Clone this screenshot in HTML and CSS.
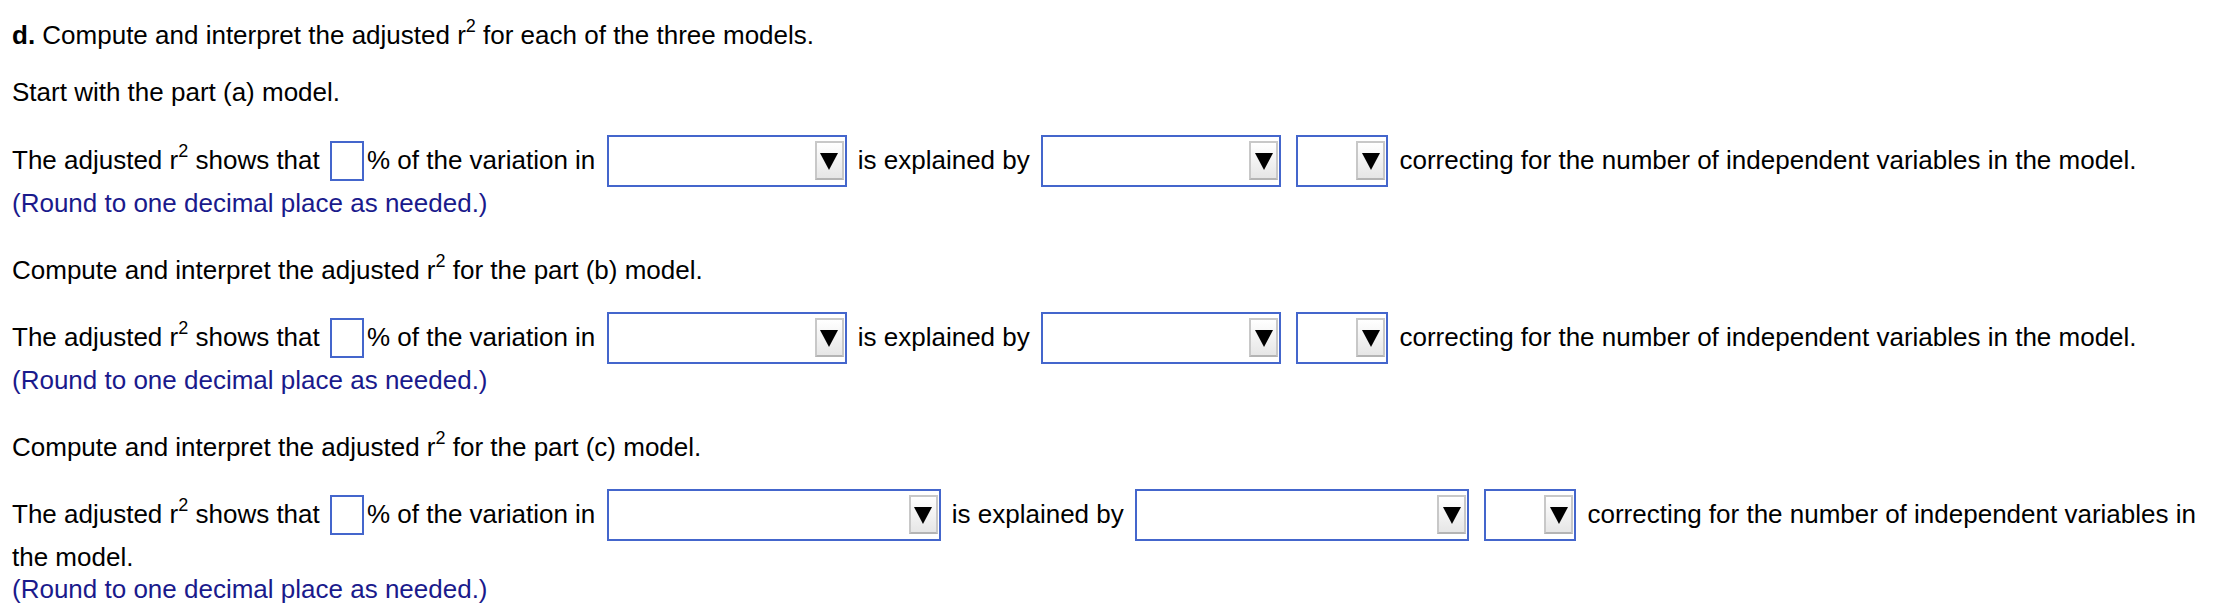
FILE: index.html
```html
<!DOCTYPE html>
<html>
<head>
<meta charset="utf-8">
<link rel="stylesheet" href="styles.css">
</head>
<body>
<div class="page">
  <p class="q first"><b>d.</b> Compute and interpret the adjusted r<sup>2</sup> for each of the three models.</p>
  <p class="q start">Start with the part (a) model.</p>

  <div class="answer">
    <div class="line">The adjusted r<sup>2</sup> shows that <span class="box"></span>% of the variation in <span class="sel w240"><span class="btn"><svg width="18" height="18" viewBox="0 0 18 18"><polygon points="0,1 18,1 9,18" fill="#000"/></svg></span></span> is explained by <span class="sel w240"><span class="btn"><svg width="18" height="18" viewBox="0 0 18 18"><polygon points="0,1 18,1 9,18" fill="#000"/></svg></span></span> <span class="sel w92"><span class="btn"><svg width="18" height="18" viewBox="0 0 18 18"><polygon points="0,1 18,1 9,18" fill="#000"/></svg></span></span> correcting for the number of independent variables in the model.</div>
    <div class="hint">(Round to one decimal place as needed.)</div>
  </div>

  <p class="q sec">Compute and interpret the adjusted r<sup>2</sup> for the part (b) model.</p>

  <div class="answer">
    <div class="line">The adjusted r<sup>2</sup> shows that <span class="box"></span>% of the variation in <span class="sel w240"><span class="btn"><svg width="18" height="18" viewBox="0 0 18 18"><polygon points="0,1 18,1 9,18" fill="#000"/></svg></span></span> is explained by <span class="sel w240"><span class="btn"><svg width="18" height="18" viewBox="0 0 18 18"><polygon points="0,1 18,1 9,18" fill="#000"/></svg></span></span> <span class="sel w92"><span class="btn"><svg width="18" height="18" viewBox="0 0 18 18"><polygon points="0,1 18,1 9,18" fill="#000"/></svg></span></span> correcting for the number of independent variables in the model.</div>
    <div class="hint">(Round to one decimal place as needed.)</div>
  </div>

  <p class="q sec">Compute and interpret the adjusted r<sup>2</sup> for the part (c) model.</p>

  <div class="answer">
    <div class="line">The adjusted r<sup>2</sup> shows that <span class="box"></span>% of the variation in <span class="sel w334"><span class="btn"><svg width="18" height="18" viewBox="0 0 18 18"><polygon points="0,1 18,1 9,18" fill="#000"/></svg></span></span> is explained by <span class="sel w334"><span class="btn"><svg width="18" height="18" viewBox="0 0 18 18"><polygon points="0,1 18,1 9,18" fill="#000"/></svg></span></span> <span class="sel w92"><span class="btn"><svg width="18" height="18" viewBox="0 0 18 18"><polygon points="0,1 18,1 9,18" fill="#000"/></svg></span></span> correcting for the number of independent variables in the model.</div>
    <div class="hint">(Round to one decimal place as needed.)</div>
  </div>
</div>
</body>
</html>
```
FILE: styles.css
```css
html, body {
  margin: 0;
  padding: 0;
  background: #fff;
}
.page {
  font-family: "Liberation Sans", Arial, sans-serif;
  font-size: 26px;
  line-height: 32px;
  color: #000;
  padding: 19px 12px 0 12px;
  width: 2200px;
  box-sizing: content-box;
}
.q {
  margin: 0 0 25px 0;
}
.q.first {
  margin-bottom: 25px;
}
.q.start {
  margin-bottom: 27px;
}
.q.sec {
  margin-top: 35px;
  margin-bottom: 26px;
}
sup {
  font-size: 18px;
  line-height: 0;
  vertical-align: 12px;
}
.answer {
  margin: 0;
}
.hint {
  color: #1a1a8c;
}
.box {
  display: inline-block;
  width: 30px;
  height: 36px;
  border: 2px solid #4466cc;
  overflow: hidden;
  vertical-align: -12px;
  margin: 0 3px 0 3px;
}
.sel {
  display: inline-block;
  box-sizing: border-box;
  height: 52px;
  border: 2px solid #4466cc;
  overflow: hidden;
  vertical-align: -18px;
  position: relative;
  margin: 0 4px;
}
.w240 { width: 240px; }
.w334 { width: 334px; }
.w92 { width: 92px; }
.btn {
  display: flex;
  align-items: center;
  justify-content: center;
  box-sizing: border-box;
  width: 29px;
  height: 39px;
  margin: 4px 1px 0 auto;
  border: 2px solid #c8c8c8;
  border-bottom-color: #b4b4b4;
  background: linear-gradient(#ffffff, #e6e6e6);
}
.btn svg {
  display: block;
}
```
